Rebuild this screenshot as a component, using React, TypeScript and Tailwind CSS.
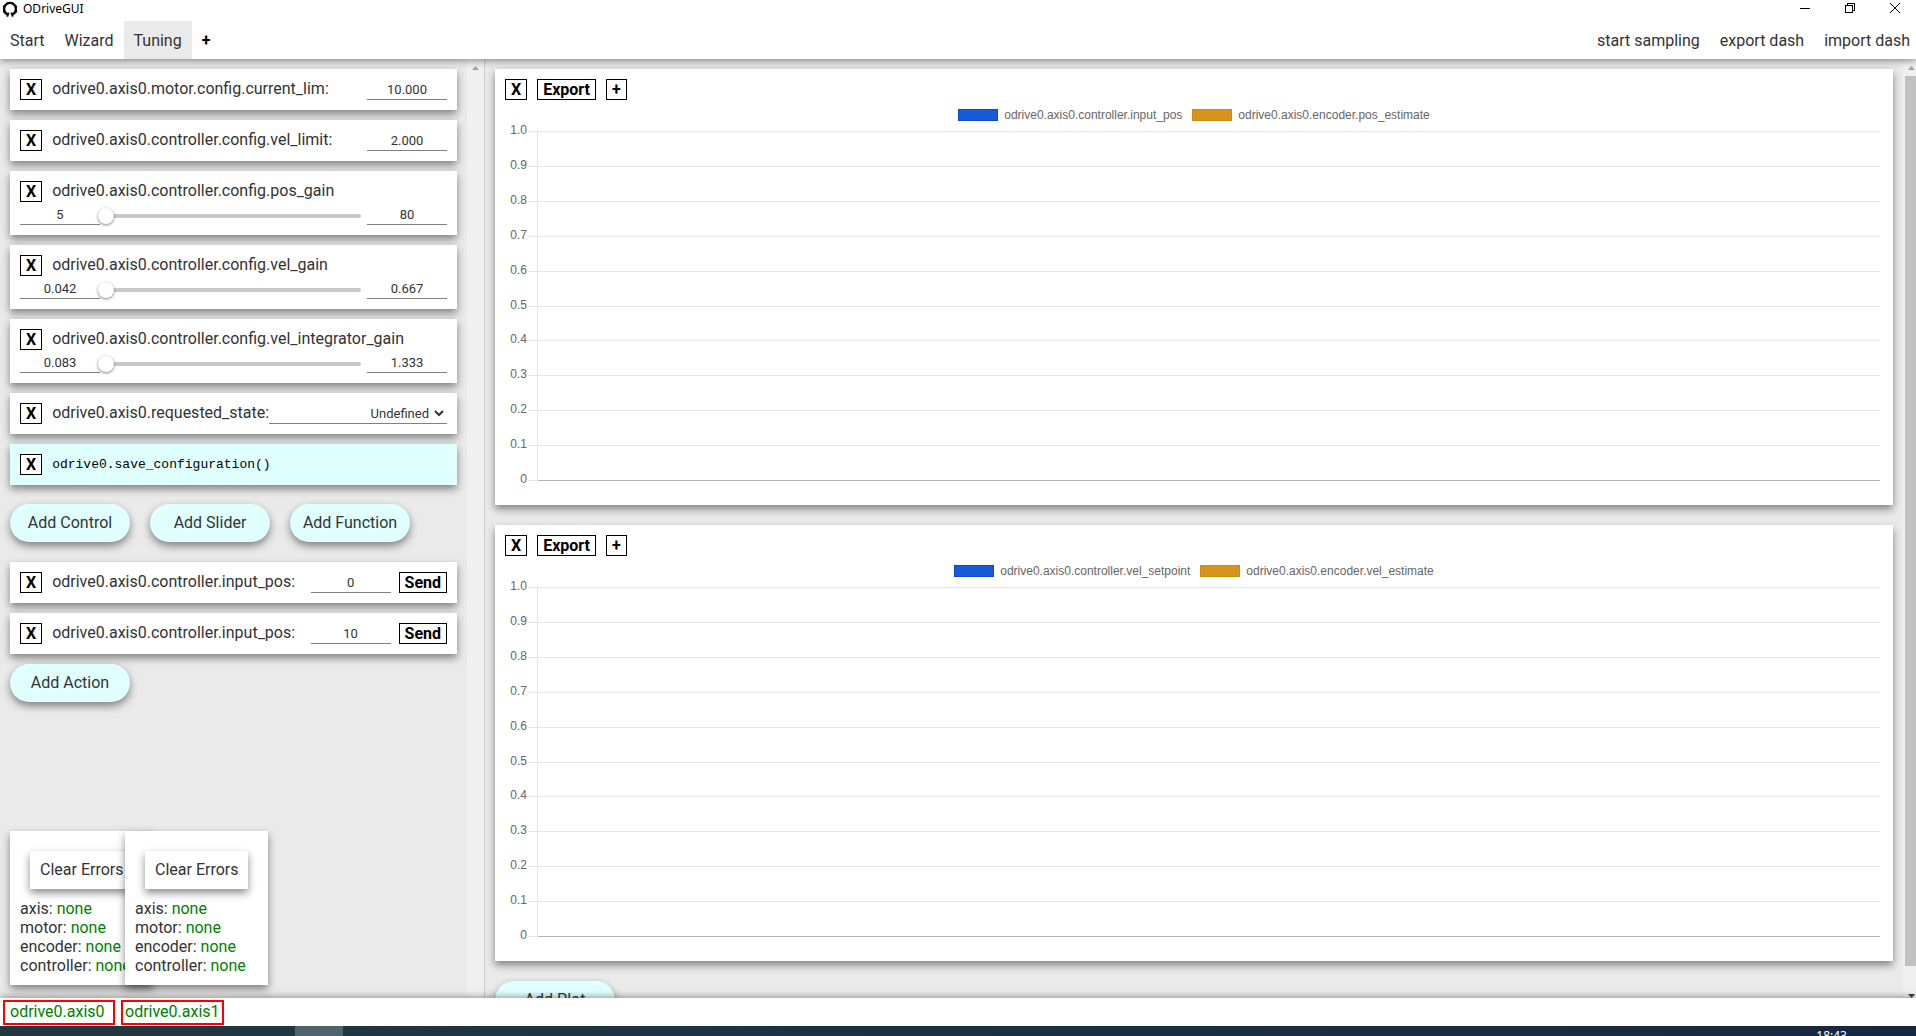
import { useState } from "react";
import type { ReactNode } from "react";

const CARD_SHADOW = "shadow-[0_4px_8px_rgba(0,0,0,0.45)]";

const TICKS = ["1.0", "0.9", "0.8", "0.7", "0.6", "0.5", "0.4", "0.3", "0.2", "0.1", "0"];

const plots = [
  { id: "pos", series: ["odrive0.axis0.controller.input_pos", "odrive0.axis0.encoder.pos_estimate"] },
  { id: "vel", series: ["odrive0.axis0.controller.vel_setpoint", "odrive0.axis0.encoder.vel_estimate"] },
];

const sliders = [
  { path: "odrive0.axis0.controller.config.pos_gain", min: "5", max: "80" },
  { path: "odrive0.axis0.controller.config.vel_gain", min: "0.042", max: "0.667" },
  { path: "odrive0.axis0.controller.config.vel_integrator_gain", min: "0.083", max: "1.333" },
];

const BoxButton = ({ label, children }: { label?: string; children: ReactNode }) => (
  <button
    type="button"
    aria-label={label}
    className="flex h-[21px] shrink-0 items-center border border-black bg-white px-[5px] text-base leading-none font-bold text-black"
  >
    {children}
  </button>
);

const Card = ({ className = "", children }: { className?: string; children: ReactNode }) => (
  <div className={`p-2.5 ${CARD_SHADOW} ${className || "bg-white"}`}>{children}</div>
);

const NumberBox = ({ label, value }: { label: string; value: string }) => (
  <input
    type="text"
    aria-label={label}
    defaultValue={value}
    className="h-[21px] w-20 shrink-0 border-b border-[#808080] bg-transparent pt-px text-center text-[13px] text-[#333] outline-none"
  />
);

const PillButton = ({ children }: { children: ReactNode }) => (
  <button
    type="button"
    className="h-[38px] w-[120px] shrink-0 rounded-full bg-[#e0ffff] shadow-[0_4px_8px_rgba(0,0,0,0.45)]"
  >
    {children}
  </button>
);

const Control = ({ path, value }: { path: string; value: string }) => (
  <Card>
    <div className="flex items-center">
      <BoxButton label="Remove">X</BoxButton>
      <span className="mb-0.5 ml-2.5 flex-1 leading-[19px]">{path}:</span>
      <NumberBox label={path} value={value} />
    </div>
  </Card>
);

const SliderControl = ({ path, min, max }: { path: string; min: string; max: string }) => (
  <Card>
    <div className="flex items-center">
      <BoxButton label="Remove">X</BoxButton>
      <span className="mb-0.5 ml-2.5 leading-[19px]">{path}</span>
    </div>
    <div className="flex h-[23px] items-end">
      <NumberBox label={`${path} min`} value={min} />
      <input
        type="range"
        aria-label={path}
        min={min}
        max={max}
        step="any"
        defaultValue={min}
        className="mr-1.5 mb-px -ml-0.5 h-4 min-w-0 flex-1 appearance-none bg-transparent [&::-webkit-slider-runnable-track]:h-1 [&::-webkit-slider-runnable-track]:rounded-full [&::-webkit-slider-runnable-track]:bg-[#c8c8c8] [&::-webkit-slider-thumb]:-mt-1.5 [&::-webkit-slider-thumb]:size-4 [&::-webkit-slider-thumb]:appearance-none [&::-webkit-slider-thumb]:rounded-full [&::-webkit-slider-thumb]:bg-white [&::-webkit-slider-thumb]:shadow-[0_1px_3px_rgba(0,0,0,0.5)]"
      />
      <NumberBox label={`${path} max`} value={max} />
    </div>
  </Card>
);

const Action = ({ path, value }: { path: string; value: string }) => (
  <Card>
    <div className="flex items-center">
      <BoxButton label="Remove">X</BoxButton>
      <span className="mb-0.5 ml-2.5 flex-1 leading-[19px]">{path}:</span>
      <NumberBox label={path} value={value} />
      <div className="ml-2 flex">
        <BoxButton>Send</BoxButton>
      </div>
    </div>
  </Card>
);

const Plot = ({ series }: { series: string[] }) => (
  <section className={`bg-white p-2.5 ${CARD_SHADOW}`}>
    <div className="flex gap-2.5">
      <BoxButton label="Remove">X</BoxButton>
      <BoxButton>Export</BoxButton>
      <BoxButton label="Add variable">+</BoxButton>
    </div>
    <div className="pt-[7px] font-['Liberation_Sans',sans-serif] text-xs text-[#666]">
      <div className="flex h-4 items-center justify-center gap-2.5">
        {series.map((name, i) => (
          <div key={name} className="flex items-center gap-1.5">
            <span
              className={`h-3 w-10 border ${i === 0 ? "border-[#0a49d1] bg-[#195bd7]" : "border-[#cf8a10] bg-[#d6941a]"}`}
            />
            {name}
          </div>
        ))}
      </div>
      <div className="pr-[3px]">
        {/* about 35px per tick, the zero line is drawn darker */}
        <svg className="block h-[372px] w-full" role="img" aria-label={series.join(", ")}>
          {TICKS.map((tick, i) => {
            const y = 8 + Math.round(i * 34.9);
            return (
              <g key={tick}>
                <text x="22" y={y + 3} textAnchor="end" fill="#666">
                  {tick}
                </text>
                <rect x="23" y={y} width="10" height="1" fill="#e5e5e5" />
                <svg x="33" y={y} width="100%" height="1">
                  <rect width="100%" height="1" fill={tick === "0" ? "#b5b5b5" : "#e5e5e5"} />
                </svg>
              </g>
            );
          })}
          <rect x="32" y="8" width="1" height="349" fill="#e5e5e5" />
        </svg>
      </div>
    </div>
  </section>
);

const ErrorPanel = ({ axis }: { axis: string }) => (
  <div className={`w-[143px] bg-white p-2.5 ${CARD_SHADOW}`} aria-label={axis}>
    <button type="button" className={`m-2.5 block h-[38px] px-2.5 whitespace-nowrap ${CARD_SHADOW}`}>
      Clear Errors
    </button>
    <div className="leading-[19px]">
      {["axis", "motor", "encoder", "controller"].map((part) => (
        <div key={part}>
          {part}: <span className="text-[#008000]">none</span>
        </div>
      ))}
    </div>
  </div>
);

const TitleBar = () => (
  <div className="flex h-[21px] items-start justify-between">
    <div className="flex items-center gap-[5px] pl-0.5">
      <svg viewBox="0 0 16 16" className="size-4 fill-none stroke-black">
        <path d="M5.6 13.4A6 6 0 1 1 10.4 13.4" strokeWidth="2.4" />
        <path d="M6.6 11.6L5.2 15.6M9.4 11.6L10.8 15.6" strokeWidth="1.8" />
        <path d="M1 5.2L3 6M15 5.2L13 6M1 11L3 10M15 11L13 10M5.5 1L6.2 3M10.5 1L9.8 3" strokeWidth="1.4" />
      </svg>
      <span className="font-['Noto_Sans',sans-serif] text-xs leading-[18px] text-black">ODriveGUI</span>
    </div>
    <div className="flex gap-[33px] pt-0.5 pr-[15px]">
      <button type="button" aria-label="Minimize">
        <svg className="size-3" shapeRendering="crispEdges">
          <rect x="1" y="6" width="10" height="1" />
        </svg>
      </button>
      <button type="button" aria-label="Restore">
        <svg className="size-3 fill-none stroke-black" shapeRendering="crispEdges">
          <path d="M1.5 3.5h7v7h-7zM3.5 3.5v-2h7v7h-2" />
        </svg>
      </button>
      <button type="button" aria-label="Close">
        <svg className="size-3 fill-none stroke-black">
          <path d="M1 1l10 10M11 1L1 11" />
        </svg>
      </button>
    </div>
  </div>
);

const App = () => {
  const [tab, setTab] = useState("Tuning");

  return (
    <div className="flex h-screen flex-col overflow-hidden bg-[#eaeaea] font-[Roboto,sans-serif] text-base text-[#333]">
      <header className="relative z-10 bg-white shadow-[0_1px_8px_rgba(0,0,0,0.5)]">
        <TitleBar />
        <nav className="flex h-[38px] justify-between">
          <div className="flex">
            {["Start", "Wizard", "Tuning"].map((name) => (
              <button
                key={name}
                type="button"
                onClick={() => setTab(name)}
                className={`px-2.5 pt-0.5 ${tab === name ? "bg-[#eaeaea]" : ""}`}
              >
                {name}
              </button>
            ))}
            <button type="button" aria-label="Add dashboard" className="px-2.5 pt-0.5 font-bold text-black">
              +
            </button>
          </div>
          <div className="flex gap-5 pt-0.5 pr-1.5">
            <button type="button">start sampling</button>
            <button type="button">export dash</button>
            <button type="button">import dash</button>
          </div>
        </nav>
      </header>

      <main className="flex min-h-0 flex-1">
        <div className="flex w-[485px] shrink-0 border-r border-[#cfcfcf]">
          <div className="flex min-w-0 flex-1 flex-col p-2.5">
            <div className="flex flex-col gap-2.5">
              <Control path="odrive0.axis0.motor.config.current_lim" value="10.000" />
              <Control path="odrive0.axis0.controller.config.vel_limit" value="2.000" />
              {sliders.map((s) => (
                <SliderControl key={s.path} {...s} />
              ))}
              <Card>
                <div className="flex items-center">
                  <BoxButton label="Remove">X</BoxButton>
                  <label htmlFor="requested-state" className="mb-0.5 ml-2.5 leading-[19px]">
                    odrive0.axis0.requested_state:
                  </label>
                  <select
                    id="requested-state"
                    className="h-[21px] min-w-0 flex-1 border-b border-[#808080] bg-transparent pr-0.5 text-right text-[13px] outline-none [text-align-last:right]"
                  >
                    <option>Undefined</option>
                    <option>Idle</option>
                  </select>
                </div>
              </Card>
              <Card className="bg-[#e0ffff]">
                <div className="flex items-center gap-2.5">
                  <BoxButton label="Remove">X</BoxButton>
                  <button type="button" className="font-['Liberation_Mono',monospace] text-[13px] text-black">
                    odrive0.save_configuration()
                  </button>
                </div>
              </Card>
            </div>
            <div className="flex gap-5 pt-[19px] pb-5">
              <PillButton>Add Control</PillButton>
              <PillButton>Add Slider</PillButton>
              <PillButton>Add Function</PillButton>
            </div>
            <div className="flex flex-col gap-2.5">
              <Action path="odrive0.axis0.controller.input_pos" value="0" />
              <Action path="odrive0.axis0.controller.input_pos" value="10" />
              <PillButton>Add Action</PillButton>
            </div>
          </div>
          <div className="flex w-[17px] shrink-0 justify-center bg-[#f0f0f0] pt-[7px]">
            <svg className="h-1 w-[7px] fill-[#a3a3a3]">
              <path d="M0 4L3.5 0L7 4z" />
            </svg>
          </div>
        </div>

        <div className="flex min-w-0 flex-1 overflow-hidden">
          <div className="flex min-w-0 flex-1 flex-col gap-5 p-2.5">
            {plots.map((p) => (
              <Plot key={p.id} series={p.series} />
            ))}
            <PillButton>Add Plot</PillButton>
          </div>
          <div className="flex w-[13px] shrink-0 flex-col items-end bg-[#f0f0f0]">
            <svg className="mt-[7px] mr-px h-1 w-[7px] fill-[#a3a3a3]">
              <path d="M0 4L3.5 0L7 4z" />
            </svg>
            <div className="mt-1.5 w-[11px] flex-1 bg-[#c1c1c1]" />
            <svg className="mt-7 mr-px h-1 w-[7px] fill-[#404040]">
              <path d="M0 0L3.5 4L7 0z" />
            </svg>
          </div>
        </div>
      </main>

      <footer className="relative z-10 bg-white shadow-[0_0_8px_rgba(0,0,0,0.5)]">
        {/* error popups hang above the status bar and overlap each other */}
        <div className="absolute bottom-full left-2.5 mb-[13px]">
          <ErrorPanel axis="odrive0.axis0" />
        </div>
        <div className="absolute bottom-full left-[125px] mb-[13px]">
          <ErrorPanel axis="odrive0.axis1" />
        </div>
        <div className="flex h-[28px] items-center gap-1.5 px-[3px] text-[#008000]">
          <button type="button" className="h-[25px] w-28 border-2 border-[#f00] pl-[5px] text-left leading-none">
            odrive0.axis0
          </button>
          <button type="button" className="h-[25px] w-[103px] border-2 border-[#f00] pl-0.5 text-left leading-none">
            odrive0.axis1
          </button>
        </div>
      </footer>

      <div className="relative z-10 flex h-2.5 shrink-0 justify-between overflow-hidden bg-linear-to-r from-[#213840] to-[#192742]">
        <div className="ml-[295px] w-12 bg-[#50636a]" />
        <span className="mr-[69px] pt-1 font-['Noto_Sans',sans-serif] text-xs leading-none text-white">18:43</span>
      </div>
    </div>
  );
};

export default App;
